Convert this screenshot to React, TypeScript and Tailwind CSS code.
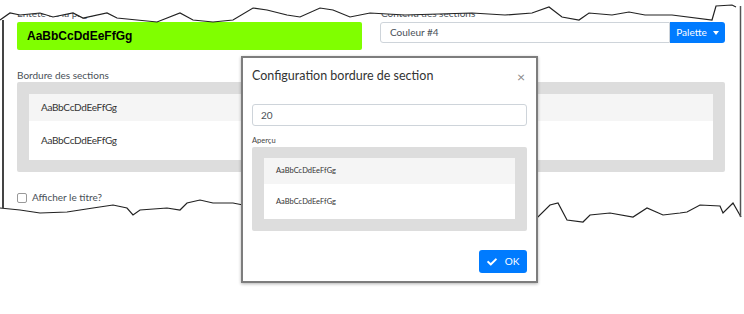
import { FaCheck } from "react-icons/fa";

const topEdge =
  "0,20 10,13 20,15 40,13 53,17 73,13 83,18 107,13 117,18 157,22 180,13 193,20 213,22 233,20 253,8 267,10 287,15 300,17 320,8 333,10 350,17 370,13 405,15 472,13 505,15 532,13 549,7 562,17 579,20 589,13 612,15 629,12 645,15 672,15 712,20 716,6 732,5 736,7";

const bottomEdge =
  "0,208 20,210 40,213 67,212 93,208 113,205 127,208 133,215 140,210 167,208 180,210 187,203 200,200 213,203 233,203 243,205 300,210 380,207 450,212 538,217 550,205 558,203 567,220 583,222 590,215 610,213 633,217 647,208 663,215 680,213 687,212 700,205 720,206 723,213 733,203 741,217";

function TornPaper() {
  return (
    <svg
      className="absolute inset-0 pointer-events-none"
      width={744}
      height={314}
      viewBox="0 0 744 314"
    >
      <polygon points={`0,0 744,0 744,7 ${topEdge.split(" ").reverse().join(" ")}`} fill="#fff" />
      <polygon points={`${bottomEdge} 744,217 744,314 0,314`} fill="#fff" />
      <polyline points={topEdge} fill="none" stroke="#222" strokeWidth={1.2} />
      <polyline points={bottomEdge} fill="none" stroke="#222" strokeWidth={1.2} />
      <line x1={3} y1={20} x2={3} y2={208} stroke="#444" strokeWidth={2} />
      <line x1={740.5} y1={6} x2={740.5} y2={217} stroke="#555" strokeWidth={1.5} />
    </svg>
  );
}

function SampleRows({ small }: { small?: boolean }) {
  return (
    <div className={`bg-[#dddddd] rounded-[2px] ${small ? "px-[12px] pt-[11px] pb-[12px]" : "p-[12px]"}`}>
      <div
        className={`bg-[#f5f5f5] flex items-center ${
          small ? "h-[26px] px-[12px] text-[7.5px]" : "h-[27px] px-[12px] text-[10px] tracking-[-0.3px]"
        } text-[#333]`}
      >
        AaBbCcDdEeFfGg
      </div>
      <div
        className={`bg-white flex items-center ${
          small ? "h-[35px] px-[12px] text-[7.5px]" : "h-[39px] px-[12px] text-[10px] tracking-[-0.3px]"
        } text-[#333]`}
      >
        AaBbCcDdEeFfGg
      </div>
    </div>
  );
}

export default function App() {
  return (
    <div
      className="relative w-[744px] h-[314px] overflow-hidden bg-white"
      style={{ fontFamily: '"Segoe UI", Lato, "Noto Sans", sans-serif' }}
    >
      {/* Page behind */}
      <div className="px-[17px] pt-[8px] w-[742px]">
        <div className="grid grid-cols-2 gap-[18px]">
          <div>
            <div className="relative -top-[2px] text-[10px] leading-[14px] text-[#495057]">Entête de la page</div>
            <div
              className="h-[28px] bg-[#80ff00] rounded-[2px] flex items-center px-[10px] text-[12px] font-bold text-black"
              style={{ fontFamily: '"Liberation Sans", Arial, sans-serif' }}
            >
              AaBbCcDdEeFfGg
            </div>
          </div>
          <div>
            <div className="relative -top-[2px] text-[10px] leading-[14px] text-[#495057] pl-[1px]">Contenu des sections</div>
            <div className="flex h-[21px]">
              <div className="flex-1 border border-[#ced4da] rounded-l-[3px] flex items-center px-[9px] text-[10px] text-[#495057]">
                Couleur #4
              </div>
              <div className="w-[55px] bg-[#007bff] rounded-r-[3px] text-white text-[10px] flex items-center justify-center gap-[6px]">
                Palette
                <span className="w-0 h-0 border-l-[3px] border-r-[3px] border-t-[4px] border-l-transparent border-r-transparent border-t-white" />
              </div>
            </div>
          </div>
        </div>

        <div className="mt-[18px] text-[10px] leading-[14px] text-[#495057]">Bordure des sections</div>
        <SampleRows />

        <label className="mt-[18px] flex items-center gap-[5px] text-[10px] text-[#495057]">
          <span className="w-[10px] h-[10px] border border-[#999] rounded-[2px] bg-white" />
          Afficher le titre?
        </label>
      </div>

      <TornPaper />

      {/* Modal */}
      <div className="absolute left-[241px] top-[56px] w-[297px] h-[227px] bg-white border-2 border-[#7d7d7d] shadow-[0_1px_3px_rgba(0,0,0,0.3)] flex flex-col">
        <div className="h-[34px] mt-[1px] px-[9px] flex items-center justify-between">
          <span className="text-[12.5px] text-[#333]">Configuration bordure de section</span>
          <span className="text-[14px] text-[#888] mr-[2px]">×</span>
        </div>
        <div className="px-[9px] pt-[11px]">
          <div className="h-[22px] border border-[#ced4da] rounded-[3px] flex items-center px-[8px] text-[10px] text-[#495057]">
            20
          </div>
          <div className="mt-[9px] text-[7.5px] leading-[11px] text-[#444]">Aperçu</div>
          <div className="mt-[1px]">
            <SampleRows small />
          </div>
        </div>
        <div className="flex justify-end px-[9px] mt-[19px]">
          <div className="w-[48px] h-[23px] bg-[#007bff] rounded-[3px] text-white text-[10px] flex items-center justify-center gap-[8px]">
            <FaCheck className="w-[10px] h-[10px]" />
            OK
          </div>
        </div>
      </div>
    </div>
  );
}
